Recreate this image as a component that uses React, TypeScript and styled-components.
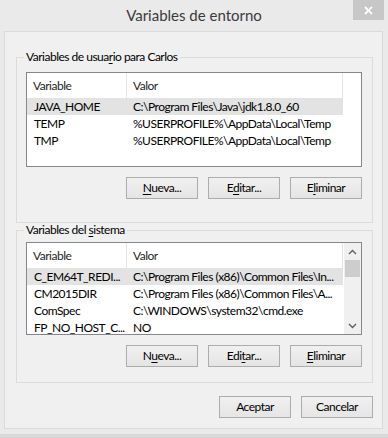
import React from 'react';
import styled, { createGlobalStyle } from 'styled-components';

const Global = createGlobalStyle`
  html, body { margin: 0; padding: 0; }
  body {
    width: 388px; height: 438px; overflow: hidden;
    background: #eaeaea;
    font-family: Lato, "Noto Sans", sans-serif;
    font-size: 12px; letter-spacing: -0.5px; color: #000;
  }
`;

const Window = styled.div`
  width: 388px; height: 438px;
  display: flex; flex-direction: column;
  background: #eaeaea;
`;

const TitleBar = styled.div`
  height: 31px; flex: none;
  display: grid; grid-template-columns: 1fr auto 1fr; align-items: start;
`;

const Title = styled.div`
  grid-column: 2;
  font-size: 15px; letter-spacing: 0; line-height: 30px; color: #3a3a3a;
`;

const CloseBtn = styled.div`
  grid-column: 3; justify-self: end;
  width: 31px; height: 20px; margin-right: 4px;
  background: #c7c7c7;
  display: flex; align-items: center; justify-content: center;
`;

const Client = styled.div`
  flex: none;
  box-sizing: border-box;
  margin-left: 4px; width: 379px; height: 398px;
  border: 1px solid #dadada;
  background: #f0f0f0;
  padding: 18px 9px 0 11px;
  display: flex; flex-direction: column;
`;

const BottomEdge = styled.div`
  margin-top: 5px; flex: 1; background: #d8d8d8;
`;

const Group = styled.fieldset<{ $pt: number; $pb: number }>`
  margin: 0; min-width: 0;
  border: 1px solid #dcdcdc;
  padding: ${(p) => p.$pt}px 10px ${(p) => p.$pb}px 9px;
  display: flex; flex-direction: column;
`;

const Legend = styled.legend`
  padding: 0 2px; margin-left: -2px;
  line-height: 14px; color: #000;
`;

const Key = styled.span`
  text-decoration: underline;
  text-underline-offset: 2px;
`;

const List = styled.div<{ $h: number }>`
  box-sizing: border-box;
  height: ${(p) => p.$h}px;
  border: 1px solid #828790;
  background: #fff;
  display: flex; overflow: hidden;
`;

const Table = styled.div`
  flex: 1; display: flex; flex-direction: column; min-width: 0;
`;

const Row = styled.div<{ $header?: boolean; $sel?: boolean }>`
  display: grid; grid-template-columns: 100px 216px;
  height: ${(p) => (p.$header ? 25 : 17)}px; flex: none;
  & > div {
    background: ${(p) => (p.$sel ? '#e3e3e3' : 'transparent')};
  }
`;

const HeadCell = styled.div`
  box-sizing: border-box;
  padding: 4px 0 0 6px;
  line-height: 17px; color: #1e1e1e;
  border-right: 1px solid #e5e5e5;
`;

const Cell = styled.div<{ $first?: boolean }>`
  padding-left: ${(p) => (p.$first ? 7 : 6)}px;
  padding-right: 2px;
  line-height: 17px;
  white-space: nowrap; overflow: hidden;
`;

const Scrollbar = styled.div`
  width: 17px; flex: none; background: #f0f0f0;
  display: flex; flex-direction: column;
`;

const Arrow = styled.div`
  height: 17px; flex: none;
  display: flex; align-items: center; justify-content: center;
`;

const Thumb = styled.div`
  height: 17px; flex: none; background: #cdcdcd; margin: 0 1px;
`;

const Track = styled.div` flex: 1; `;

const ButtonRow = styled.div<{ $mt: number }>`
  display: flex; justify-content: flex-end; gap: 10px;
  margin-top: ${(p) => p.$mt}px;
`;

const Button = styled.div`
  box-sizing: border-box;
  width: 72px; height: 22px;
  border: 1px solid #acacac;
  background: linear-gradient(#f0f0f0, #e5e5e5);
  display: flex; align-items: center; justify-content: center;
  line-height: 16px; color: #000;
`;

const Spacer = styled.div` height: 13px; `;

type Item = { name: string; value: string };

const userVars: Item[] = [
  { name: 'JAVA_HOME', value: 'C:\\Program Files\\Java\\jdk1.8.0_60' },
  { name: 'TEMP', value: '%USERPROFILE%\\AppData\\Local\\Temp' },
  { name: 'TMP', value: '%USERPROFILE%\\AppData\\Local\\Temp' },
];

const sysVars: Item[] = [
  { name: 'C_EM64T_REDI...', value: 'C:\\Program Files (x86)\\Common Files\\In...' },
  { name: 'CM2015DIR', value: 'C:\\Program Files (x86)\\Common Files\\A...' },
  { name: 'ComSpec', value: 'C:\\WINDOWS\\system32\\cmd.exe' },
  { name: 'FP_NO_HOST_C...', value: 'NO' },
];

const Chevron = ({ up }: { up?: boolean }) => (
  <svg width="9" height="6" viewBox="0 0 9 6">
    <path
      d={up ? 'M1 5 L4.5 1.5 L8 5' : 'M1 1 L4.5 4.5 L8 1'}
      fill="none" stroke="#606060" strokeWidth="1.4"
    />
  </svg>
);

const VarList = ({ items, height, scroll }: { items: Item[]; height: number; scroll?: boolean }) => (
  <List $h={height}>
    <Table>
      <Row $header>
        <HeadCell>Variable</HeadCell>
        <HeadCell>Valor</HeadCell>
      </Row>
      {items.map((it, i) => (
        <Row key={it.name} $sel={i === 0}>
          <Cell $first>{it.name}</Cell>
          <Cell>{it.value}</Cell>
        </Row>
      ))}
    </Table>
    {scroll && (
      <Scrollbar>
        <Arrow><Chevron up /></Arrow>
        <Thumb />
        <Track />
        <Arrow><Chevron /></Arrow>
      </Scrollbar>
    )}
  </List>
);

export default function App() {
  return (
    <>
      <Global />
      <Window>
        <TitleBar>
          <Title>Variables de entorno</Title>
          <CloseBtn>
            <svg width="9" height="9" viewBox="0 0 9 9">
              <path d="M1 1 L8 8 M8 1 L1 8" stroke="#fff" strokeWidth="1.8" />
            </svg>
          </CloseBtn>
        </TitleBar>
        <Client>
          <Group $pt={8} $pb={23}>
            <Legend>Variables de usua<Key>r</Key>io para Carlos</Legend>
            <VarList items={userVars} height={95} />
            <ButtonRow $mt={10}>
              <Button><span><Key>N</Key>ueva...</span></Button>
              <Button><span>E<Key>d</Key>itar...</span></Button>
              <Button><span>E<Key>l</Key>iminar</span></Button>
            </ButtonRow>
          </Group>
          <Group $pt={5} $pb={15}>
            <Legend>Variables del <Key>s</Key>istema</Legend>
            <VarList items={sysVars} height={93} scroll />
            <ButtonRow $mt={10}>
              <Button><span>N<Key>u</Key>eva...</span></Button>
              <Button><span>Edi<Key>t</Key>ar...</span></Button>
              <Button><span><Key>E</Key>liminar</span></Button>
            </ButtonRow>
          </Group>
          <Spacer />
          <ButtonRow $mt={0}>
            <Button>Aceptar</Button>
            <Button>Cancelar</Button>
          </ButtonRow>
        </Client>
        <BottomEdge />
      </Window>
    </>
  );
}
